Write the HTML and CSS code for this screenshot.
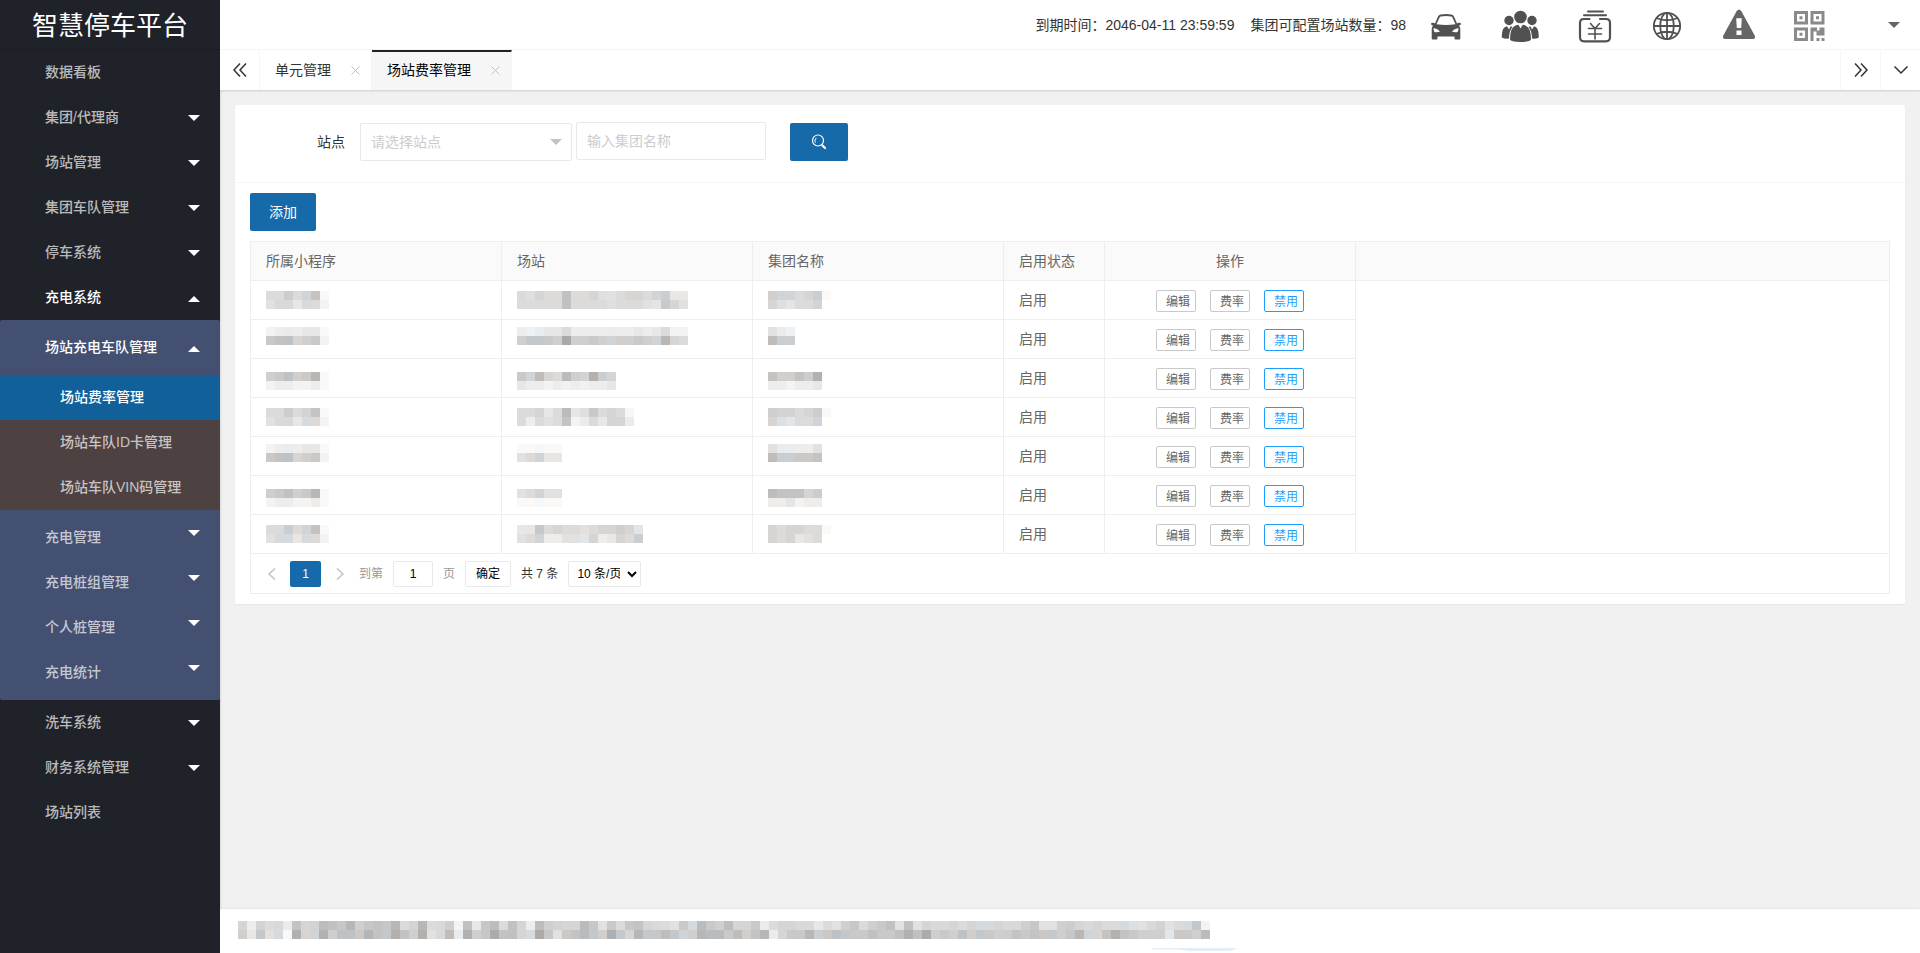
FILE: index.html
```html
<!DOCTYPE html>
<html lang="zh-CN">
<head>
<meta charset="utf-8">
<title>智慧停车平台</title>
<link rel="stylesheet" href="styles.css">
</head>
<body>
<div class="app">
  <aside class="sidebar">
    <h1 class="logo">智慧停车平台</h1>
    <nav>
      <ul class="menu">
        <li><a class="menu-link" href="#">数据看板</a></li>
        <li><a class="menu-link" href="#">集团/代理商<i class="arrow"></i></a></li>
        <li><a class="menu-link" href="#">场站管理<i class="arrow"></i></a></li>
        <li><a class="menu-link" href="#">集团车队管理<i class="arrow"></i></a></li>
        <li><a class="menu-link" href="#">停车系统<i class="arrow"></i></a></li>
        <li>
          <a class="menu-link is-open" href="#">充电系统<i class="arrow arrow-up"></i></a>
          <ul class="submenu">
            <li>
              <a class="menu-link is-open" href="#">场站充电车队管理<i class="arrow arrow-up"></i></a>
              <ul class="leaf-menu">
                <li><a class="menu-link is-current" href="#">场站费率管理</a></li>
                <li><a class="menu-link" href="#">场站车队ID卡管理</a></li>
                <li><a class="menu-link" href="#">场站车队VIN码管理</a></li>
              </ul>
            </li>
            <li><a class="menu-link" href="#">充电管理<i class="arrow"></i></a></li>
            <li><a class="menu-link" href="#">充电桩组管理<i class="arrow"></i></a></li>
            <li><a class="menu-link" href="#">个人桩管理<i class="arrow"></i></a></li>
            <li><a class="menu-link" href="#">充电统计<i class="arrow"></i></a></li>
          </ul>
        </li>
        <li><a class="menu-link" href="#">洗车系统<i class="arrow"></i></a></li>
        <li><a class="menu-link" href="#">财务系统管理<i class="arrow"></i></a></li>
        <li><a class="menu-link" href="#">场站列表</a></li>
      </ul>
    </nav>
  </aside>

  <div class="main">
    <header class="topbar">
      <div class="account-info">
        <span>到期时间：2046-04-11 23:59:59</span>
        <span>集团可配置场站数量：98</span>
      </div>
      <div class="top-icons">
        <a href="#" aria-label="车辆"><svg width="32" height="32" viewBox="0 0 32 32" fill="#515151"><path fill-rule="evenodd" d="M8 6.500Q8.600 5 10.500 4.600Q16 3.600 21.500 4.600Q23.400 5 24 6.500L27 13.600Q27.600 13 29 12.800Q31 12.700 31 14Q30.800 15.300 29 15.400Q30.300 17.500 30.300 19.500V28.500Q30.300 29.500 29.300 29.500H25.500Q24.500 29.500 24.500 28.500V26.500H7.500V28.500Q7.500 29.500 6.500 29.500H2.700Q1.700 29.500 1.700 28.500V19.500Q1.700 17.500 3 15.400Q1.200 15.300 1 14Q1 12.700 3 12.800Q4.400 13 5 13.600ZM9.600 7.400L6.500 14.200Q16 15.800 25.500 14.200L22.400 7.400Q22.100 6.700 21.200 6.500Q16 5.700 10.800 6.500Q9.900 6.700 9.600 7.400ZM3.500 18Q3.600 21.800 5 22.200Q8 22.600 10 21.600Q8 18.800 3.500 18ZM28.500 18Q24 18.800 22 21.600Q24 22.600 27 22.200Q28.400 21.800 28.500 18Z"/></svg></a>
        <a href="#" aria-label="用户"><svg width="36" height="36" viewBox="0 -2 36 36" fill="#515151"><circle cx="18.500" cy="7" r="6.300"/><circle cx="7" cy="10.500" r="4.700"/><circle cx="30" cy="10.500" r="4.700"/><path d="M8 29.500Q8 17.500 13.500 15.500Q15 14.800 16.300 14.700L18.500 18.500L20.700 14.700Q22 14.800 23.500 15.500Q29 17.500 29 29.500Q28.500 31.800 18.500 32Q8.500 31.800 8 29.500Z"/><path d="M-.2 27.500Q-.5 17 5 16.300L7 19.500L8.700 16.300L10.500 17Q7 21 7 28.600Q2.500 29 -.2 27.500ZM36.800 27.500Q37 17 32 16.300L30 19.500L28.300 16.300L26.500 17Q30 21 30 28.600Q34.500 29 36.800 27.500Z"/></svg></a>
        <a href="#" aria-label="收费"><svg width="34" height="34" viewBox="0 0 34 34" fill="none" stroke="#515151" stroke-linecap="round"><path stroke-width="2" d="M10 2.500H25M6 6.200H28"/><path stroke-width="2.200" d="M11.500 10H6Q2 10 2 14V28Q2 32.300 6 32.300H28Q32 32.300 32 28V14Q32 10 28 10H22"/><path stroke-width="1.600" d="M12.500 14.500L17 19.500L21.500 14.500M17 19.500V30M10.500 19.500H23.500M10.500 25H23.500"/></svg></a>
        <a href="#" aria-label="网站"><svg width="30" height="30" viewBox="0 0 30 30" fill="none" stroke="#515151" stroke-width="1.800"><circle cx="15" cy="15" r="13.200"/><ellipse cx="15" cy="15" rx="6.800" ry="13.200"/><path d="M15 2V28M2 15H28M4.500 7Q15 11.500 25.500 7M4.500 23Q15 18.500 25.500 23"/></svg></a>
        <a href="#" aria-label="告警"><svg width="32" height="34" viewBox="0 2 32 34"><path fill="#666" d="M14.600 4.300Q17 .7 19.400 4.300L32.700 28.500Q34 31.800 30.800 32H3.200Q0 31.800 1.300 28.500Z"/><path fill="#fff" d="M14.200 11.200H19.800L19.200 21H14.800ZM14.500 23.500H19.500V28H14.500Z"/></svg></a>
        <a href="#" aria-label="二维码"><svg width="32" height="30" viewBox="0 0 32 30" fill="#8a8a8a"><path fill-rule="evenodd" d="M0 0H14V13.500H0ZM3 3V10.500H11V3ZM16.500 0H30.500V13.500H16.500ZM19.500 3V10.500H27.500V3ZM0 16.500H14V30H0ZM3 19.500V27H11V19.500ZM5.500 5.300H8.500V8.200H5.500ZM22 5.300H25V8.200H22ZM5.500 21.800H8.500V24.700H5.500ZM16.500 16.500H23V19.500H25.500V16.500H30.500V24.500H22.500V20.500H19.500V30H16.500ZM22.500 27H25.500V30H22.500ZM27.500 27H30.500V30H27.500Z"/></svg></a>
      </div>
      <button class="user-toggle" type="button" aria-label="用户菜单"><i class="arrow"></i></button>
    </header>

    <div class="tabbar">
      <button class="tab-tool" type="button" aria-label="向左"><svg width="14" height="14" viewBox="0 0 14 14"><path d="M7 .5L1 7L7 13.500M13 .5L7 7L13 13.500"/></svg></button>
      <div class="tabs">
        <div class="tab"><a href="#">单元管理</a><button type="button" aria-label="关闭"><svg width="9" height="9" viewBox="0 0 9 9"><path d="M.5 .5L8.500 8.500M8.500 .5L.5 8.500"/></svg></button></div>
        <div class="tab is-active"><a href="#">场站费率管理</a><button type="button" aria-label="关闭"><svg width="9" height="9" viewBox="0 0 9 9"><path d="M.5 .5L8.500 8.500M8.500 .5L.5 8.500"/></svg></button></div>
      </div>
      <button class="tab-tool" type="button" aria-label="向右"><svg width="14" height="14" viewBox="0 0 14 14"><path d="M1 .5L7 7L1 13.500M7 .5L13 7L7 13.500"/></svg></button>
      <button class="tab-tool" type="button" aria-label="更多"><svg width="14" height="14" viewBox="0 0 14 14"><path d="M.5 3.500L7 10L13.500 3.500"/></svg></button>
    </div>

    <main class="content">
      <section class="card">
        <form class="filters">
          <label class="filter-label" for="site">站点</label>
          <div class="select-box">
            <select id="site"><option>请选择站点</option></select>
          </div>
          <input class="group-input" type="text" placeholder="输入集团名称" aria-label="集团名称">
          <button class="btn-primary btn-search" type="button" aria-label="搜索"><svg width="16" height="16" viewBox="0 0 16 16" fill="none" stroke="#fff"><circle cx="7" cy="6.500" r="5.500" stroke-width="1.200"/><path stroke-width="1" d="M4.300 8.500Q3 6 5.300 4"/><path stroke-width="2.200" stroke-linecap="round" d="M11.500 11.500L14 14"/></svg></button>
        </form>
        <div class="card-body">
          <button class="btn-primary btn-add" type="button">添加</button>
          <div class="grid">
            <table class="rates">
              <colgroup><col class="col-wide"><col class="col-wide"><col class="col-wide"><col class="col-state"><col class="col-wide"><col></colgroup>
              <thead><tr><th>所属小程序</th><th>场站</th><th>集团名称</th><th>启用状态</th><th class="center">操作</th><th class="filler"></th></tr></thead>
              <tbody id="rate-rows"></tbody>
            </table>
            <div class="pager">
              <button class="page-arrow" type="button" aria-label="上一页"><svg width="8" height="12" viewBox="0 0 8 12"><path d="M7 .5L1 6L7 11.500"/></svg></button>
              <button class="page-current" type="button">1</button>
              <button class="page-arrow" type="button" aria-label="下一页"><svg width="8" height="12" viewBox="0 0 8 12"><path d="M1 .5L7 6L1 11.500"/></svg></button>
              <label class="page-jump">到第<input type="text" value="1">页</label>
              <button class="page-ok" type="button">确定</button>
              <span class="page-total">共 7 条</span>
              <select class="page-size" aria-label="每页条数"><option>10 条/页</option></select>
            </div>
          </div>
        </div>
      </section>
    </main>

    <footer class="footer" id="footer">
      <svg class="footer-mark" width="86" height="3" viewBox="0 0 86 3"><path fill="#e4eef6" d="M0 0H86Q84 3 78 3H40L28 1.500H4Z"/></svg>
    </footer>
  </div>
</div>
<script src="main.js"></script>
</body>
</html>
```

FILE: styles.css
```css
* { box-sizing: border-box; }

body {
  margin: 0;
  background: #f1f1f1;
  color: #333;
  font: 14px/24px "Liberation Sans", "Noto Sans CJK SC", sans-serif;
}

button, input, select { font: inherit; margin: 0; }
button { cursor: pointer; }
a { color: inherit; text-decoration: none; }
ul { list-style: none; margin: 0; padding: 0; }
svg { display: block; overflow: visible; }

.app { display: flex; min-height: 100vh; }

/* Sidebar */
.sidebar {
  flex: none;
  width: 220px;
  background: #20222a;
  color: rgba(255, 255, 255, .7);
  box-shadow: 1px 0 2px rgba(0, 0, 0, .1);
}
.logo {
  margin: 0;
  height: 50px;
  border-bottom: 1px solid #1b1d23;
  color: #fff;
  font-size: 26px;
  font-weight: 400;
  line-height: 53px;
  text-align: center;
}
.menu-link {
  display: flex;
  align-items: center;
  justify-content: space-between;
  height: 45px;
  padding: 0 20px 2px 45px;
  font-weight: 500;
}
.arrow {
  border: 6px solid transparent;
  border-top-color: #fff;
  border-bottom-width: 0;
}
.menu .arrow { margin-top: 2px; }
.menu .arrow-up {
  margin-top: 5px;
  border-width: 0 6px 6px;
  border-bottom-color: #fff;
}
.is-open, .is-current { color: #fff; }
.submenu {
  padding: 5px 0;
  border-radius: 2px;
  background: #435072;
}
.submenu .arrow { margin-bottom: 9px; }
.submenu .arrow-up { margin-bottom: 0; }
.leaf-menu { padding: 5px 0; }
.leaf-menu li { background: #4e4141; }
.leaf-menu .menu-link { padding-left: 60px; }
.leaf-menu .is-current { background: #116099; }

/* Top bar */
.main { flex: 1; min-width: 0; display: flex; flex-direction: column; }
.topbar {
  display: flex;
  align-items: center;
  justify-content: flex-end;
  height: 50px;
  padding-right: 20px;
  border-bottom: 1px solid #f6f6f6;
  background: #fff;
}
.account-info { display: flex; gap: 16px; margin-right: 24px; }
.top-icons {
  display: flex;
  align-items: center;
  gap: 40px;
  margin-right: 62px;
  padding-top: 2px;
}
.user-toggle { display: flex; padding: 0; border: 0; background: none; }
.user-toggle .arrow { border-top-color: #666; }

.tabbar {
  display: flex;
  height: 40px;
  background: #fff;
  box-shadow: 0 1px 2px rgba(0, 0, 0, .15);
}
.tab-tool {
  display: flex;
  align-items: center;
  justify-content: center;
  width: 40px;
  padding: 0;
  border: 0;
  border-left: 1px solid #f6f6f6;
  background: none;
}
.tab-tool:first-child { width: 39px; border-left: 0; }
.tab-tool svg { fill: none; stroke: #333; stroke-width: 1.5; }
.tabs { display: flex; flex: 1; border-left: 1px solid #f6f6f6; }
.tab {
  display: flex;
  align-items: center;
  gap: 20px;
  padding: 0 11px 0 15px;
  border-right: 1px solid #f6f6f6;
}
.tab button { display: flex; padding: 0; border: 0; background: none; }
.tab svg { fill: none; stroke: #c2c2c2; }
.is-active {
  border-top: 2px solid #20222a;
  padding-bottom: 2px;
  background: #f6f6f6;
  color: #000;
}

/* Content */
.content { flex: 1; padding: 15px; }
.card {
  border-radius: 2px;
  background: #fff;
  box-shadow: 0 1px 2px rgba(0, 0, 0, .05);
}
.filters {
  display: flex;
  align-items: center;
  height: 78px;
  padding: 0 15px 4px;
  border-bottom: 1px solid #f6f6f6;
}
.filter-label { width: 95px; text-align: right; margin-right: 15px; }
.select-box { position: relative; width: 212px; margin-right: 4px; }
.select-box::after {
  content: "";
  position: absolute;
  top: 16px;
  right: 10px;
  border: 6px solid transparent;
  border-top-color: #c2c2c2;
  border-bottom-width: 0;
  pointer-events: none;
}
.select-box select, .group-input {
  display: block;
  height: 38px;
  border: 1px solid #e9e9e9;
  border-radius: 2px;
  background: #fff;
  padding: 0 10px;
}
.select-box select { width: 100%; appearance: none; color: #ccc; }
.group-input { width: 190px; margin-right: 24px; margin-bottom: 2px; }
.group-input::placeholder { color: #ccc; }
.btn-primary {
  height: 38px;
  border: 0;
  border-radius: 2px;
  background: #176aa9;
  color: #fff;
}
.btn-search { display: flex; align-items: center; justify-content: center; width: 58px; }
.btn-add { display: block; width: 66px; margin-bottom: 10px; }
.card-body { padding: 10px 15px; }

/* Data table */
.grid { border: 1px solid #eee; color: #666; }
.rates { width: 100%; table-layout: fixed; border-spacing: 0; }
.col-wide { width: 251px; }
.col-state { width: 101px; }
.rates th, .rates td {
  height: 39px;
  padding: 0 15px;
  border: solid #eee;
  border-width: 0 1px 1px 0;
  font-weight: 400;
  text-align: left;
}
.rates th { background: #fafafa; }
.rates .center { text-align: center; }
.rates th.filler { border-right: 0; }
.rates td.filler { border: 0; }
.actions { display: flex; justify-content: center; gap: 14px; padding-top: 2px; }
.btn-mini {
  width: 40px;
  height: 22px;
  padding: 1px 5px 0 9px;
  border: 1px solid #c9c9c9;
  border-radius: 2px;
  background: #fff;
  color: #666;
  font-size: 12px;
  line-height: 20px;
  white-space: nowrap;
}
.btn-disable { border-color: #1e9fff; color: #1e9fff; }

/* Pager */
.pager {
  display: flex;
  align-items: center;
  height: 40px;
  padding: 0 10px;
  border-top: 1px solid #eee;
  margin-top: -1px;
  color: #333;
  font-size: 12px;
}
.page-arrow {
  display: flex;
  align-items: center;
  justify-content: center;
  width: 21px;
  height: 26px;
  padding: 0;
  border: 0;
  background: none;
}
.page-arrow svg { fill: none; stroke: #c2c2c2; stroke-width: 1.5; }
.page-current {
  width: 31px;
  height: 26px;
  margin: 0 8px;
  border: 0;
  border-radius: 2px;
  background: #176aa9;
  color: #fff;
}
.page-jump { display: flex; align-items: center; gap: 10px; margin-left: 9px; color: #999; }
.page-jump input, .page-ok, .page-size {
  height: 26px;
  border: 1px solid #e9e9e9;
  border-radius: 2px;
  background: #fff;
  color: #000;
}
.page-jump input { width: 40px; padding: 0; text-align: center; }
.page-ok { width: 46px; padding: 0; margin: 0 10px; }
.page-size { width: 73px; padding: 0 4px; margin-left: 10px; }

/* Obscured text */
.mosaic { shape-rendering: crispEdges; }
.shift-up { margin-top: -6px; }
.shift-down { margin-top: 6px; }

.footer {
  position: relative;
  height: 44px;
  padding: 12px 18px;
  background: #fff;
  box-shadow: 0 -1px 2px rgba(0, 0, 0, .05);
}
.footer-mark { position: absolute; left: 930px; bottom: 2px; }
```

FILE: main.js
```js
// Each letter is one tile: a = white, every next letter a step darker.
// Capitals carry a cool tint.
const TILE = 9;

function tileColor(letter) {
  const cool = letter !== letter.toLowerCase();
  const level = 255 - 6 * (letter.toLowerCase().charCodeAt(0) - 97);
  return cool ? `rgb(${level - 4},${level - 1},${level + 2})` : `rgb(${level + 1},${level},${level - 1})`;
}

function mosaic(rows, shift) {
  const width = Math.max(...rows.map(r => r.length)) * TILE;
  const tiles = rows.map((row, y) => [...row].map((letter, x) =>
    `<rect x="${x * TILE}" y="${y * TILE}" width="${TILE}" height="${TILE}" fill="${tileColor(letter)}"/>`).join("")).join("");
  return `<svg class="mosaic ${shift || ""}" width="${width}" height="${rows.length * TILE}" aria-hidden="true">${tiles}</svg>`;
}

const app = {
  even: ["ggIgHkb", "fGGeGgc"],
  low: ["cdDdeeb", "jkKhijc"],
  high: ["ijKijmb", "cddccdb"],
};

const records = [
  { app: app.even, site: ["gFhggKgghFfghhgHIee", "gggggKggggFgggfEjhf"], group: ["iHHghIb", "hFEggHa"] },
  { app: app.low, site: ["dCDeegddddDddedegcc", "iJJjiOiijiHiijiHmhg"], group: ["fDC", "lII"], shift: "shift-up" },
  { app: app.high, site: ["jHlhgLiHnIh", "eddcdCdCdde"], group: ["kiikIn", "ddcdde"], shift: "shift-down" },
  { app: app.even, site: ["gghegLeFjghgB", "gdgfgkcDgehhD"], group: ["iHHghIb", "hFEggHa"] },
  { app: app.low, site: ["bbBbb", "fgHee"], group: ["fDDddf", "lIIjjk"], shift: "shift-up" },
  { app: app.high, site: ["fgHff", "bbBbb"], group: ["lkkkhI", "ddEcdd"], shift: "shift-down" },
  { app: app.even, site: ["eeJghggfghhihE", "fgHddffEhdehgI"], group: ["hghhggb", "hghefga"] },
];

document.getElementById("rate-rows").innerHTML = records.map(r => `
  <tr>
    <td>${mosaic(r.app, r.shift)}</td>
    <td>${mosaic(r.site, r.shift)}</td>
    <td>${mosaic(r.group, r.shift)}</td>
    <td>启用</td>
    <td><div class="actions">
      <button class="btn-mini" type="button">编辑</button>
      <button class="btn-mini" type="button">费率</button>
      <button class="btn-mini btn-disable" type="button">禁用</button>
    </div></td>
    <td class="filler"></td>
  </tr>`).join("");

document.getElementById("footer").insertAdjacentHTML("afterbegin", mosaic([
  "hdHgGDkhHlKJmiJkJmgHmgGicKeJlgKhdliHhhLJfjgJkhGgfjGLjilhhjDghhGGegfiJgijKfKfhGGhghGGhGGiJffiIhGhggGFfGHfgGJcd",
  "ieJfGbnhHniKKjMkJnkinfGlDniJokKhGoJfjkLJiNJhmJJlJHimLLjlikmDhjjmIjKJjjKjjKnKoijiKiJjiIkjkjJiJmHhknkjiiiEjjiLef"
].map(row => row.slice(0, 108))));
```
